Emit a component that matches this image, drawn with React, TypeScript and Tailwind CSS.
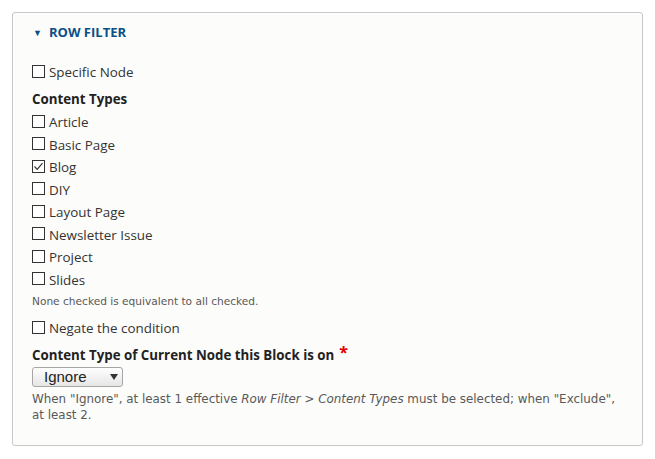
import React from 'react';

const contentTypes = [
  { label: 'Article', checked: false },
  { label: 'Basic Page', checked: false },
  { label: 'Blog', checked: true },
  { label: 'DIY', checked: false },
  { label: 'Layout Page', checked: false },
  { label: 'Newsletter Issue', checked: false },
  { label: 'Project', checked: false },
  { label: 'Slides', checked: false },
];

const descFont = { fontFamily: '"DejaVu Sans", Verdana, sans-serif' };

function Box({ checked }: { checked?: boolean }) {
  return (
    <span className="relative w-[13px] h-[13px] border border-[#333] bg-white shrink-0 -translate-y-[1px]">
      {checked && (
        <svg viewBox="0 0 13 13" className="absolute -left-px -top-px w-[13px] h-[13px]">
          <path d="M2.5 6.5 L5.2 9.3 L10.5 3.2" fill="none" stroke="#333" strokeWidth="1.2" />
        </svg>
      )}
    </span>
  );
}

function Check({ label, checked, h = 'h-[22.5px]' }: { label: string; checked?: boolean; h?: string }) {
  return (
    <div className={`flex items-center gap-[4px] ${h}`}>
      <Box checked={checked} />
      <span className="text-[13.4px] text-[#333]">{label}</span>
    </div>
  );
}

export default function App() {
  return (
    <div className="p-[12px] bg-white min-h-[459px]" style={{ fontFamily: '"Open Sans", "Noto Sans", sans-serif' }}>
      <div className="w-[631px] border border-[#c8c8c8] rounded-[3px] bg-[#fcfcfa] pl-[19px] pr-[22px] pb-[22px]">
        {/* Summary */}
        <div className="h-[40px] flex items-center">
          <span className="text-[#0a4f85] text-[9px] w-[17px] pl-[1px]">▼</span>
          <span className="text-[13px] font-bold text-[#0a4f85]">ROW FILTER</span>
        </div>

        <div className="mt-[8px]">
          <Check label="Specific Node" h="h-[22px]" />
        </div>

        <div className="mt-[6px] h-[22px] flex items-center text-[13.3px] font-bold text-[#222]">Content Types</div>

        {contentTypes.map((t) => (
          <Check key={t.label} label={t.label} checked={t.checked} />
        ))}

        <div className="h-[22px] flex items-center text-[10.6px] text-[#595959]" style={descFont}>
          None checked is equivalent to all checked.
        </div>

        <div className="mt-[4px]">
          <Check label="Negate the condition" h="h-[22px]" />
        </div>

        <div className="mt-[6px] h-[22px] flex items-center text-[13.3px] font-bold text-[#222]">
          Content Type of Current Node this Block is on
          <span className="text-[#e00000] ml-[5px] text-[16px] -translate-y-[4px]">*</span>
        </div>

        <div
          className="w-[91px] h-[20px] border border-[#a6a6a6] rounded-[3px] bg-gradient-to-b from-[#fefefe] to-[#e6e6e6] flex items-center pl-[11px] pr-[4px] justify-between"
          style={{ fontFamily: '"Liberation Sans", Arial, sans-serif' }}
        >
          <span className="text-[15px] text-[#222]">Ignore</span>
          <svg viewBox="0 0 8 6" className="w-[8px] h-[6px]">
            <path d="M0 0 H8 L4 6 Z" fill="#333" />
          </svg>
        </div>

        <p className="mt-[4px] text-[11.9px] leading-[16px] text-[#595959]" style={descFont}>
          When "Ignore", at least 1 effective <em>Row Filter &gt; Content Types</em> must be selected; when "Exclude", at least 2.
        </p>
      </div>
    </div>
  );
}
